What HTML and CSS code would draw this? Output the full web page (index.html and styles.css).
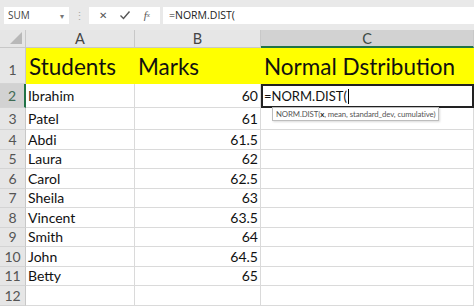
FILE: index.html
```html
<!DOCTYPE html>
<html lang="en">
<head>
    <meta charset="UTF-8">
    <title>NORM.DIST</title>
    <link rel="stylesheet" href="styles.css">
</head>
<body>
    <div class="toolbar">
        <div class="name-box">SUM <span class="caret">&#9662;</span></div>
        <div class="dots">&#8942;</div>
        <div class="buttons">
            <span class="btn">&#10005;</span>
            <span class="btn">
                <svg width="12" height="10" viewBox="0 0 12 10"><path d="M1.5 5.5 L4.5 8.5 L10.5 1.5" fill="none" stroke="#555" stroke-width="1.4"/></svg>
            </span>
            <span class="btn fx">f<sub>x</sub></span>
        </div>
        <div class="formula">=NORM.DIST(</div>
    </div>

    <div class="sheet">
        <div class="corner"><span class="tri"></span></div>
        <div class="col-head">A</div>
        <div class="col-head">B</div>
        <div class="col-head active">C</div>

        <div class="row-head first">1</div>
        <div class="cell title">Students</div>
        <div class="cell title">Marks</div>
        <div class="cell title">Normal Dstribution</div>

        <div class="row-head active">2</div>
        <div class="cell">Ibrahim</div>
        <div class="cell num">60</div>
        <div class="cell editing">=NORM.DIST(<span class="cursor"></span>
            <div class="tip">NORM.DIST(<strong>x</strong>, mean, standard_dev, cumulative)</div>
        </div>

        <div class="row-head">3</div>
        <div class="cell">Patel</div>
        <div class="cell num">61</div>
        <div class="cell"></div>

        <div class="row-head">4</div>
        <div class="cell">Abdi</div>
        <div class="cell num">61.5</div>
        <div class="cell"></div>

        <div class="row-head">5</div>
        <div class="cell">Laura</div>
        <div class="cell num">62</div>
        <div class="cell"></div>

        <div class="row-head">6</div>
        <div class="cell">Carol</div>
        <div class="cell num">62.5</div>
        <div class="cell"></div>

        <div class="row-head">7</div>
        <div class="cell">Sheila</div>
        <div class="cell num">63</div>
        <div class="cell"></div>

        <div class="row-head">8</div>
        <div class="cell">Vincent</div>
        <div class="cell num">63.5</div>
        <div class="cell"></div>

        <div class="row-head">9</div>
        <div class="cell">Smith</div>
        <div class="cell num">64</div>
        <div class="cell"></div>

        <div class="row-head">10</div>
        <div class="cell">John</div>
        <div class="cell num">64.5</div>
        <div class="cell"></div>

        <div class="row-head">11</div>
        <div class="cell">Betty</div>
        <div class="cell num">65</div>
        <div class="cell"></div>

        <div class="row-head">12</div>
        <div class="cell"></div>
        <div class="cell"></div>
        <div class="cell"></div>
    </div>
</body>
</html>
```

FILE: styles.css
```css
body {
    margin: 0;
    width: 474px;
    height: 307px;
    overflow: hidden;
    font-family: Lato, "Open Sans", sans-serif;
    background: #fff;
}
.toolbar {
    height: 30px;
    background: #e9e9e9;
    display: flex;
    align-items: center;
    padding: 0 0 0 4px;
    box-sizing: border-box;
    font-family: "Open Sans", sans-serif;
    font-size: 10px;
    color: #444;
}
.name-box {
    width: 65px;
    height: 17px;
    background: #fff;
    box-sizing: border-box;
    padding: 0 5px 0 4px;
    display: flex;
    align-items: center;
    justify-content: space-between;
}
.caret {
    font-size: 8px;
    color: #777;
}
.dots {
    width: 20px;
    text-align: center;
    color: #aaa;
    font-size: 11px;
}
.buttons {
    width: 71px;
    height: 17px;
    background: #fff;
    display: flex;
    align-items: center;
    justify-content: space-around;
    padding: 0 4px;
    box-sizing: border-box;
    color: #555;
}
.btn {
    font-size: 10px;
    display: flex;
    align-items: center;
}
.fx {
    font-family: "Liberation Serif", serif;
    font-style: italic;
    font-size: 11px;
}
.fx sub {
    font-size: 7px;
}
.formula {
    flex: 1;
    height: 17px;
    margin-left: 3px;
    background: #fff;
    display: flex;
    align-items: center;
    padding-left: 6px;
    font-size: 10.5px;
    color: #222;
}
.sheet {
    display: grid;
    grid-template-columns: 26px 109px 126px 1fr;
    grid-template-rows: 18px 36px 24px 22px repeat(9, 19.5px);
}
.corner {
    background: #e6e6e6;
    border-right: 1px solid #c8c8c8;
    border-bottom: 1px solid #c8c8c8;
    position: relative;
}
.tri {
    position: absolute;
    right: 3px;
    bottom: 3px;
    width: 0;
    height: 0;
    border-left: 12px solid transparent;
    border-bottom: 12px solid #b8b8b8;
}
.col-head {
    background: #e6e6e6;
    border-right: 1px solid #c8c8c8;
    border-bottom: 1px solid #c8c8c8;
    text-align: center;
    font-size: 14.5px;
    line-height: 18px;
    color: #444;
    box-sizing: border-box;
}
.col-head.active {
    background: #d2d2d2;
    border-bottom: 2px solid #217346;
    color: #3d4a44;
    line-height: 17px;
}
.row-head {
    background: #e6e6e6;
    border-right: 1px solid #c8c8c8;
    border-bottom: 1px solid #d4d4d4;
    display: flex;
    align-items: center;
    justify-content: center;
    font-size: 14px;
    color: #555;
    box-sizing: border-box;
}
.row-head.first {
    align-items: flex-end;
    padding-bottom: 5px;
}
.row-head.active {
    background: #d2d2d2;
    border-right: 2px solid #217346;
    color: #3f6b55;
}
.cell {
    border-right: 1px solid #dadada;
    border-bottom: 1px solid #dadada;
    display: flex;
    align-items: center;
    padding: 0 2px 0 2px;
    font-size: 14px;
    color: #111;
    box-sizing: border-box;
    white-space: nowrap;
    position: relative;
}
.num {
    justify-content: flex-end;
}
.title {
    background: #ffff00;
    align-items: flex-end;
    font-size: 22.5px;
    padding-bottom: 4px;
    padding-left: 3px;
    border-right: none;
    border-bottom: none;
}
.editing {
    border: 2px solid #222;
    padding-left: 1px;
    font-size: 13px;
}
.cursor {
    display: inline-block;
    width: 1px;
    height: 15px;
    background: #000;
    margin-left: 1px;
}
.tip {
    position: absolute;
    left: 9px;
    top: 21px;
    background: #fff;
    border: 1px solid #bdbdbd;
    box-shadow: 1px 1px 2px rgba(0, 0, 0, 0.15);
    font-size: 7.8px;
    letter-spacing: -0.1px;
    color: #555;
    padding: 1px 3px;
    z-index: 2;
}
.tip strong {
    font-weight: bold;
    color: #222;
}
```
